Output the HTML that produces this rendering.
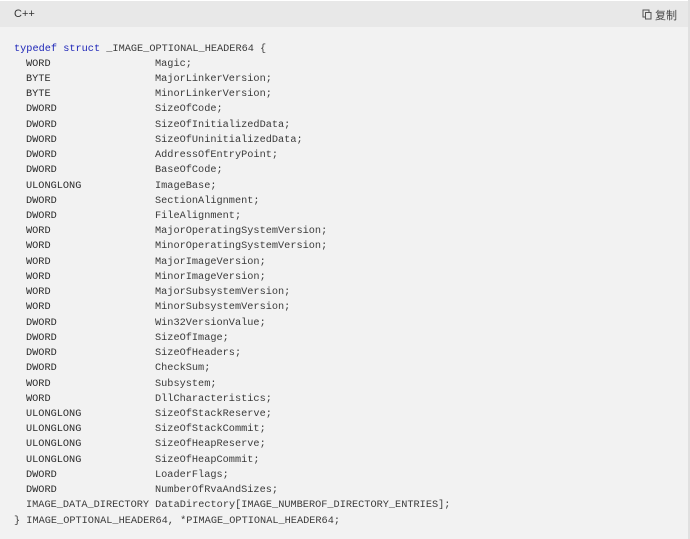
<!DOCTYPE html>
<html><head><meta charset="utf-8"><style>
*{margin:0;padding:0;box-sizing:border-box}
body{width:690px;height:539px;background:#f2f2f2;overflow:hidden;position:relative;font-family:"Liberation Sans","Noto Sans CJK SC",sans-serif}
.hd{position:absolute;left:0;top:0;width:688px;height:27px;background:#e8e8e8;border-top:1px solid #fff}
.lang{position:absolute;left:14px;top:7px;font-size:11px;color:#333}
.copy{position:absolute;left:642px;top:6px;font-size:11px;color:#444}
.rb{position:absolute;left:688px;top:0;width:2px;height:539px;background:#e0e0e0}
.code{position:absolute;left:0;top:41.5px;font-family:"Liberation Mono",monospace;font-size:10.25px;color:#3a3a3a}
.l{position:absolute;height:15.23px;line-height:15px;white-space:pre}
.t{position:absolute;left:26px;color:#2a2a2a}
.n{position:absolute;left:155px}
.k{color:#1e26b8}
</style></head><body>
<div class="hd"><span class="lang">C++</span>
<span class="copy"><svg width="10" height="11" viewBox="0 0 10 11" style="vertical-align:-1px"><rect x="1" y="1" width="6" height="7" fill="none" stroke="#555"/><rect x="3.5" y="3.5" width="5.5" height="6.5" fill="#e8e8e8" stroke="#555"/></svg> 复制</span></div>
<div class="rb"></div>
<div class="code" id="c"></div>
<script>
var rows=[["WORD","Magic;"],["BYTE","MajorLinkerVersion;"],["BYTE","MinorLinkerVersion;"],["DWORD","SizeOfCode;"],["DWORD","SizeOfInitializedData;"],["DWORD","SizeOfUninitializedData;"],["DWORD","AddressOfEntryPoint;"],["DWORD","BaseOfCode;"],["ULONGLONG","ImageBase;"],["DWORD","SectionAlignment;"],["DWORD","FileAlignment;"],["WORD","MajorOperatingSystemVersion;"],["WORD","MinorOperatingSystemVersion;"],["WORD","MajorImageVersion;"],["WORD","MinorImageVersion;"],["WORD","MajorSubsystemVersion;"],["WORD","MinorSubsystemVersion;"],["DWORD","Win32VersionValue;"],["DWORD","SizeOfImage;"],["DWORD","SizeOfHeaders;"],["DWORD","CheckSum;"],["WORD","Subsystem;"],["WORD","DllCharacteristics;"],["ULONGLONG","SizeOfStackReserve;"],["ULONGLONG","SizeOfStackCommit;"],["ULONGLONG","SizeOfHeapReserve;"],["ULONGLONG","SizeOfHeapCommit;"],["DWORD","LoaderFlags;"],["DWORD","NumberOfRvaAndSizes;"]];
var h='<div class="l" style="top:0;left:14px"><span class="k">typedef struct</span> _IMAGE_OPTIONAL_HEADER64 {</div>';
rows.forEach(function(r,i){h+='<div class="l" style="top:'+((i+1)*15.23)+'px;left:0;width:600px"><span class="t">'+r[0]+'</span><span class="n">'+r[1]+'</span></div>';});
h+='<div class="l" style="top:'+(30*15.23)+'px;left:26px">IMAGE_DATA_DIRECTORY DataDirectory[IMAGE_NUMBEROF_DIRECTORY_ENTRIES];</div>';
h+='<div class="l" style="top:'+(31*15.23)+'px;left:14px">} IMAGE_OPTIONAL_HEADER64, *PIMAGE_OPTIONAL_HEADER64;</div>';
document.getElementById('c').innerHTML=h;
</script>
</body></html>
